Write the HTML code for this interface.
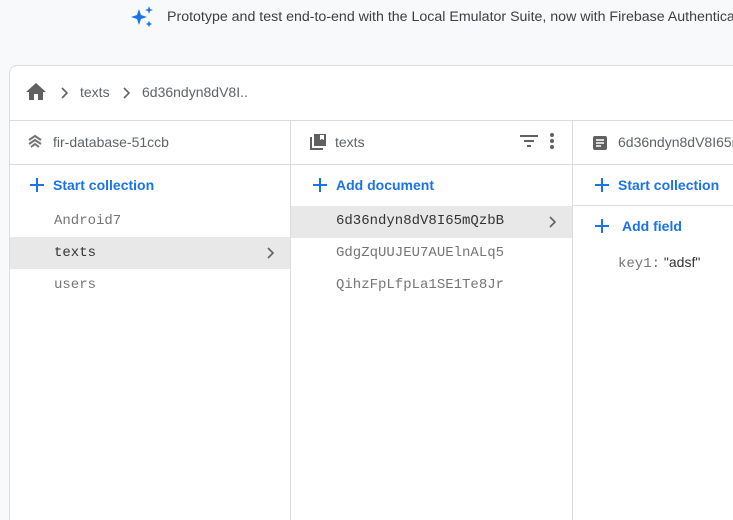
<!DOCTYPE html>
<html><head><style>
*{margin:0;padding:0;box-sizing:border-box}
html{width:733px;height:520px;overflow:hidden}
body{width:733px;height:520px;overflow:hidden;background:#f8f9fa;font-family:"Liberation Sans",Roboto,sans-serif;position:relative;color:#5f6368}
.abs{position:absolute}
.banner{left:167px;top:9px;font-size:14.2px;color:#3c4043;white-space:nowrap;width:566px;overflow:hidden}
.card{left:9px;top:65px;width:724px;height:455px;background:#fff;border:1px solid #dadce0;border-right:none;border-bottom:none;border-radius:8px 0 0 0;overflow:hidden}
.hline{height:1px;background:#dadce0}
.vline{width:1px;background:#dadce0}
.hdr{font-size:14px;color:#5f6368}
.blue{color:#1a73e8;font-size:14px;font-weight:bold;white-space:nowrap}
.mono{font-family:"Liberation Mono",monospace;font-size:14px;color:#757575}
</style></head><body>
<svg class="abs" style="left:131px;top:6px" width="24" height="22" viewBox="0 0 24 22"><path d="M8 3 L10 9 L16 11 L10 13 L8 19 L6 13 L0 11 L6 9Z" fill="#1a73e8"/><path d="M18 0 L19 3 L22 4 L19 5 L18 8 L17 5 L14 4 L17 3Z" fill="#1a73e8"/><path d="M18 15 L19 17 L21 18 L19 19 L18 21 L17 19 L15 18 L17 17Z" fill="#1a73e8"/></svg>
<div class="abs banner">Prototype and test end-to-end with the Local Emulator Suite, now with Firebase Authentication</div>
<div class="abs card">
 <svg class="abs" style="left:16px;top:17px" width="20" height="18" viewBox="0 0 20 18"><path d="M10 0 L20 9 H17 V17 H12 V11 H8 V17 H3 V9 H0Z" fill="#616161"/></svg>
 <svg class="abs" style="left:50px;top:21px" width="8" height="12" viewBox="0 0 8 12"><path d="M2 1 L7 6 L2 11" stroke="#616161" stroke-width="1.6" fill="none"/></svg>
 <div class="abs hdr" style="left:70px;top:18px">texts</div>
 <svg class="abs" style="left:112px;top:21px" width="8" height="12" viewBox="0 0 8 12"><path d="M2 1 L7 6 L2 11" stroke="#616161" stroke-width="1.6" fill="none"/></svg>
 <div class="abs hdr" style="left:132px;top:18px">6d36ndyn8dV8I..</div>
 <div class="abs hline" style="left:0;top:54px;width:724px"></div>
 <div class="abs hline" style="left:0;top:98px;width:724px"></div>
 <div class="abs vline" style="left:280px;top:55px;height:400px"></div>
 <div class="abs vline" style="left:562px;top:55px;height:400px"></div>
 <svg class="abs" style="left:17px;top:68px" width="16" height="16" viewBox="0 0 16 16"><path d="M2 6 L8 2 L14 6 M2 10 L8 6 L14 10 M4 13 L8 10 L12 13" stroke="#757575" stroke-width="2" fill="none"/></svg>
 <div class="abs hdr" style="left:43px;top:68px">fir-database-51ccb</div>
 <svg class="abs" style="left:19px;top:111px" width="16" height="16" viewBox="0 0 16 16"><path d="M8 1 V15 M1 8 H15" stroke="#1a73e8" stroke-width="2"/></svg>
 <div class="abs blue" style="left:43px;top:111px">Start collection</div>
 <div class="abs mono" style="left:44px;top:147px">Android7</div>
 <div class="abs" style="left:0;top:171px;width:280px;height:32px;background:#e8e8e8"></div>
 <div class="abs mono" style="left:44px;top:179px;color:#333">texts</div>
 <svg class="abs" style="left:256px;top:181px" width="8" height="12" viewBox="0 0 8 12"><path d="M2 1 L7 6 L2 11" stroke="#616161" stroke-width="1.6" fill="none"/></svg>
 <div class="abs mono" style="left:44px;top:211px">users</div>
 <svg class="abs" style="left:300px;top:68px" width="16" height="16" viewBox="0 0 16 16"><path d="M1 3 V15 H13" stroke="#616161" stroke-width="2" fill="none"/><rect x="4" y="0" width="12" height="12" fill="#616161"/><path d="M10 1 V6 L12 5 L14 6 V1" fill="#fff"/></svg>
 <div class="abs hdr" style="left:325px;top:68px">texts</div>
 <svg class="abs" style="left:510px;top:68px" width="18" height="14" viewBox="0 0 18 14"><path d="M0 2 H18 M4 7 H14 M7 12 H11" stroke="#616161" stroke-width="2"/></svg>
 <svg class="abs" style="left:539px;top:66px" width="6" height="18" viewBox="0 0 6 18"><circle cx="3" cy="3" r="2" fill="#616161"/><circle cx="3" cy="9" r="2" fill="#616161"/><circle cx="3" cy="15" r="2" fill="#616161"/></svg>
 <svg class="abs" style="left:302px;top:111px" width="16" height="16" viewBox="0 0 16 16"><path d="M8 1 V15 M1 8 H15" stroke="#1a73e8" stroke-width="2"/></svg>
 <div class="abs blue" style="left:326px;top:111px">Add document</div>
 <div class="abs" style="left:281px;top:140px;width:281px;height:32px;background:#e8e8e8"></div>
 <div class="abs mono" style="left:326px;top:147px;color:#333">6d36ndyn8dV8I65mQzbB</div>
 <svg class="abs" style="left:538px;top:150px" width="8" height="12" viewBox="0 0 8 12"><path d="M2 1 L7 6 L2 11" stroke="#616161" stroke-width="1.6" fill="none"/></svg>
 <div class="abs mono" style="left:326px;top:179px">GdgZqUUJEU7AUElnALq5</div>
 <div class="abs mono" style="left:326px;top:211px">QihzFpLfpLa1SE1Te8Jr</div>
 <svg class="abs" style="left:582px;top:69px" width="16" height="16" viewBox="0 0 16 16"><rect x="1" y="1" width="14" height="14" rx="2" fill="#616161"/><path d="M4 5 H12 M4 8 H12 M4 11 H9" stroke="#fff" stroke-width="1.5"/></svg>
 <div class="abs hdr" style="left:608px;top:68px;white-space:nowrap">6d36ndyn8dV8I65mQzbB</div>
 <svg class="abs" style="left:584px;top:111px" width="16" height="16" viewBox="0 0 16 16"><path d="M8 1 V15 M1 8 H15" stroke="#1a73e8" stroke-width="2"/></svg>
 <div class="abs blue" style="left:608px;top:111px">Start collection</div>
 <div class="abs hline" style="left:563px;top:139px;width:161px"></div>
 <svg class="abs" style="left:584px;top:152px" width="16" height="16" viewBox="0 0 16 16"><path d="M8 1 V15 M1 8 H15" stroke="#1a73e8" stroke-width="2"/></svg>
 <div class="abs blue" style="left:612px;top:152px">Add field</div>
 <div class="abs" style="left:608px;top:188px;font-size:14px;white-space:nowrap"><span class="mono">key1:</span> <span style="color:#333">"adsf"</span></div>
</div>
</body></html>
